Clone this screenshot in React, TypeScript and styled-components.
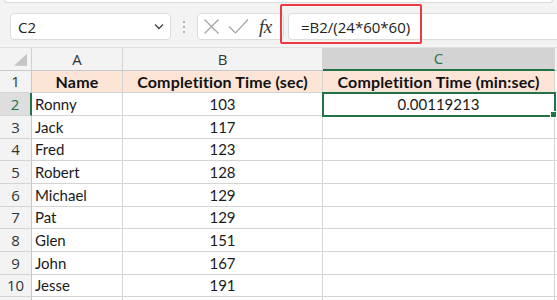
import React from "react";
import styled, { createGlobalStyle, css } from "styled-components";

const GlobalStyle = createGlobalStyle`
  html, body {
    margin: 0;
    padding: 0;
    background: #ffffff;
    overflow: hidden;
  }
`;

const Page = styled.div`
  width: 557px;
  height: 300px;
  overflow: hidden;
  background: #ffffff;
  font-family: "Lato", "Liberation Sans", sans-serif;
`;

const Toolbar = styled.div`
  position: relative;
  height: 48px;
  background: #f3f3f3;
  box-sizing: border-box;
  border-bottom: 1px solid #e2e2e2;
`;

const RibbonEdge = styled.div`
  height: 2px;
  margin: 0 4px;
  background: #ffffff;
  border: 1px solid #dadada;
  border-top: none;
  border-radius: 0 0 6px 6px;
`;

const BarRow = styled.div`
  display: flex;
  align-items: stretch;
  height: 27px;
  margin-top: 10px;
  padding-left: 10px;
`;

const NameBox = styled.div`
  box-sizing: border-box;
  width: 161px;
  display: flex;
  align-items: center;
  justify-content: space-between;
  padding: 0 6px 0 7px;
  background: #ffffff;
  border: 1px solid #dcdcdc;
  border-radius: 4px;
  font-family: "Open Sans", "Noto Sans", sans-serif;
  font-size: 15px;
  color: #222;
`;

const Grip = styled.div`
  width: 26px;
  display: flex;
  flex-direction: column;
  align-items: center;
  justify-content: center;
  gap: 3px;

  span {
    width: 2px;
    height: 2px;
    background: #9c9c9c;
    border-radius: 1px;
  }
`;

const IconBox = styled.div`
  box-sizing: border-box;
  width: 87px;
  display: flex;
  align-items: center;
  padding-left: 5px;
  gap: 8px;
  background: #ffffff;
  border: 1px solid #dcdcdc;
  border-radius: 4px;
`;

const Fx = styled.span`
  font-family: "Liberation Serif", "DejaVu Serif", serif;
  font-style: italic;
  font-size: 19px;
  color: #333;
  margin-left: 2px;
  letter-spacing: -0.5px;
`;

const FormulaInput = styled.div`
  flex: 1;
  margin-left: 4px;
  box-sizing: border-box;
  display: flex;
  align-items: center;
  padding-left: 12px;
  background: #ffffff;
  border: 1px solid #dcdcdc;
  border-right: none;
  border-radius: 4px 0 0 4px;
  font-family: "Open Sans", "Noto Sans", sans-serif;
  font-size: 15px;
  color: #222;
`;

const Highlight = styled.div`
  position: absolute;
  left: 280px;
  top: 4px;
  width: 142px;
  height: 40px;
  box-sizing: border-box;
  border: 2px solid #ec3a43;
  border-radius: 2px;
  pointer-events: none;
`;

const Sheet = styled.div`
  display: grid;
  grid-template-columns: 32px 91px 200px 232px 1fr;
  grid-auto-rows: 22.67px;
`;

const Corner = styled.div`
  position: relative;
  background: #f3f3f3;
  box-sizing: border-box;
  border-right: 1px solid #d0d0d0;
  border-bottom: 1px solid #c8c8c8;

  &::after {
    content: "";
    position: absolute;
    right: 4px;
    bottom: 4px;
    width: 13px;
    height: 12px;
    background: #c4c4c4;
    clip-path: polygon(100% 0, 100% 100%, 0 100%);
  }
`;

const ColHeader = styled.div<{ $active?: boolean }>`
  box-sizing: border-box;
  display: flex;
  align-items: center;
  justify-content: center;
  background: #f3f3f3;
  border-right: 1px solid #d4d4d4;
  border-bottom: 1px solid #c8c8c8;
  font-family: "Open Sans", "Noto Sans", sans-serif;
  font-size: 15px;
  color: #333;

  ${(p) =>
    p.$active &&
    css`
      background: #d3d3d3;
      border-bottom: 2px solid #217346;
      color: #217346;
    `}
`;

const RowHeader = styled.div<{ $active?: boolean }>`
  box-sizing: border-box;
  display: flex;
  align-items: center;
  justify-content: center;
  background: #f3f3f3;
  border-right: 1px solid #c8c8c8;
  border-bottom: 1px solid #d4d4d4;
  font-family: "Open Sans", "Noto Sans", sans-serif;
  font-size: 15px;
  color: #333;

  ${(p) =>
    p.$active &&
    css`
      background: #dedede;
      border-right: 2px solid #217346;
      color: #217346;
    `}
`;

const Cell = styled.div<{ $align?: "left" | "center"; $head?: boolean; $selected?: boolean }>`
  position: relative;
  box-sizing: border-box;
  display: flex;
  align-items: center;
  justify-content: ${(p) => (p.$align === "center" ? "center" : "flex-start")};
  padding: 0 3px;
  border-right: 1px solid #d4d4d4;
  border-bottom: 1px solid #d4d4d4;
  font-size: 15px;
  color: #1a1a1a;
  white-space: nowrap;

  ${(p) =>
    p.$head &&
    css`
      background: #fce4d6;
      font-weight: 700;
      font-size: 16px;
      letter-spacing: 0.15px;
      color: #111;
    `}

  ${(p) =>
    p.$selected &&
    css`
      outline: 2px solid #217346;
      outline-offset: -1px;
      z-index: 1;
    `}
`;

const FillHandle = styled.span`
  position: absolute;
  right: -3px;
  bottom: -3px;
  width: 5px;
  height: 5px;
  background: #217346;
  border: 1px solid #ffffff;
`;

const people: [string, number][] = [
  ["Ronny", 103],
  ["Jack", 117],
  ["Fred", 123],
  ["Robert", 128],
  ["Michael", 129],
  ["Pat", 129],
  ["Glen", 151],
  ["John", 167],
  ["Jesse", 191],
];

const CrossIcon = () => (
  <svg width="17" height="17" viewBox="0 0 17 17">
    <path d="M1.5 1.5 L15.5 15.5 M15.5 1.5 L1.5 15.5" stroke="#a3a3a3" strokeWidth="1.2" fill="none" />
  </svg>
);

const CheckIcon = () => (
  <svg width="21" height="17" viewBox="0 0 21 17">
    <path d="M1 8.5 L7.5 15 L20 1.5" stroke="#a3a3a3" strokeWidth="1.2" fill="none" />
  </svg>
);

const Chevron = () => (
  <svg width="10" height="7" viewBox="0 0 10 7">
    <path d="M1 1.5 L5 5.5 L9 1.5" stroke="#444" strokeWidth="1.4" fill="none" />
  </svg>
);

export default function App() {
  return (
    <Page>
      <GlobalStyle />
      <Toolbar>
        <RibbonEdge />
        <BarRow>
          <NameBox>
            C2
            <Chevron />
          </NameBox>
          <Grip>
            <span />
            <span />
            <span />
          </Grip>
          <IconBox>
            <CrossIcon />
            <CheckIcon />
            <Fx>fx</Fx>
          </IconBox>
          <FormulaInput>=B2/(24*60*60)</FormulaInput>
        </BarRow>
        <Highlight />
      </Toolbar>

      <Sheet>
        <Corner />
        <ColHeader>A</ColHeader>
        <ColHeader>B</ColHeader>
        <ColHeader $active>C</ColHeader>
        <ColHeader />

        <RowHeader>1</RowHeader>
        <Cell $head $align="center">Name</Cell>
        <Cell $head $align="center">Completition Time (sec)</Cell>
        <Cell $head $align="center">Completition Time (min:sec)</Cell>
        <Cell />

        {people.map(([name, secs], i) => (
          <React.Fragment key={name}>
            <RowHeader $active={i === 0}>{i + 2}</RowHeader>
            <Cell>{name}</Cell>
            <Cell $align="center">{secs}</Cell>
            {i === 0 ? (
              <Cell $align="center" $selected>
                0.00119213
                <FillHandle />
              </Cell>
            ) : (
              <Cell />
            )}
            <Cell />
          </React.Fragment>
        ))}

        <RowHeader />
        <Cell />
        <Cell />
        <Cell />
        <Cell />
      </Sheet>
    </Page>
  );
}
